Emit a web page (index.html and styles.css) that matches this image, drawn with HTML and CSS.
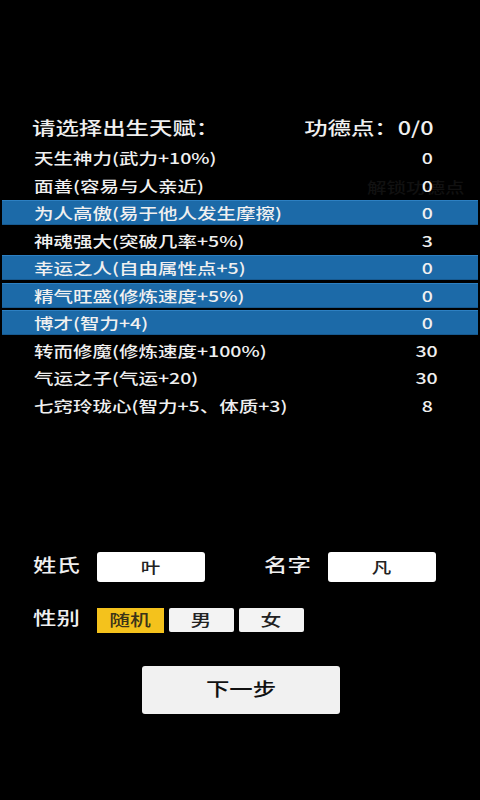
FILE: index.html
```html
<!DOCTYPE html>
<html lang="zh">
<head>
<meta charset="utf-8">
<link rel="stylesheet" href="styles.css">
</head>
<body>
<div class="screen">
  <div class="header">
    <span class="title sx">请选择出生天赋：</span>
    <span class="points sx">功德点：0/0</span>
  </div>
  <div class="list">
    <div class="row"><span class="name sx">天生神力(武力+10%)</span><span class="val"><span class="sx">0</span></span></div>
    <div class="row"><span class="name sx">面善(容易与人亲近)</span><span class="wm sx">解锁功德点</span><span class="val"><span class="sx">0</span></span></div>
    <div class="row sel"><span class="name sx">为人高傲(易于他人发生摩擦)</span><span class="val"><span class="sx">0</span></span></div>
    <div class="row"><span class="name sx">神魂强大(突破几率+5%)</span><span class="val"><span class="sx">3</span></span></div>
    <div class="row sel"><span class="name sx">幸运之人(自由属性点+5)</span><span class="val"><span class="sx">0</span></span></div>
    <div class="row sel"><span class="name sx">精气旺盛(修炼速度+5%)</span><span class="val"><span class="sx">0</span></span></div>
    <div class="row sel"><span class="name sx">博才(智力+4)</span><span class="val"><span class="sx">0</span></span></div>
    <div class="row"><span class="name sx">转而修魔(修炼速度+100%)</span><span class="val"><span class="sx">30</span></span></div>
    <div class="row"><span class="name sx">气运之子(气运+20)</span><span class="val"><span class="sx">30</span></span></div>
    <div class="row"><span class="name sx">七窍玲珑心(智力+5、体质+3)</span><span class="val"><span class="sx">8</span></span></div>
  </div>
  <div class="form">
    <div class="frow">
      <span class="label sx">姓氏</span>
      <div class="input"><span class="sx">叶</span></div>
      <span class="label label2 sx">名字</span>
      <div class="input"><span class="sx">凡</span></div>
    </div>
    <div class="frow gender">
      <span class="label sx">性别</span>
      <div class="opts">
        <div class="opt active"><span class="sx">随机</span></div>
        <div class="opt"><span class="sx">男</span></div>
        <div class="opt"><span class="sx">女</span></div>
      </div>
    </div>
  </div>
  <div class="next-wrap"><div class="next"><span class="sx">下一步</span></div></div>
</div>
</body>
</html>
```
FILE: styles.css
```css
html, body {
  margin: 0;
  padding: 0;
  background: #000;
}
body {
  width: 480px;
  height: 800px;
  overflow: hidden;
  font-family: "Noto Sans CJK SC", "Noto Sans", sans-serif;
  font-weight: 500;
  color: #f0f0f0;
}
.screen {
  width: 480px;
  height: 800px;
  padding-top: 113px;
  box-sizing: border-box;
}
.sx {
  display: inline-block;
  white-space: nowrap;
  transform: scaleX(1.3);
  transform-origin: center center;
}
.header {
  display: flex;
  align-items: center;
  justify-content: space-between;
  height: 28px;
  padding: 0 46px 0 32px;
  margin-bottom: 4px;
}
.title {
  font-size: 18px;
  transform-origin: left center;
}
.points {
  font-size: 18px;
  transform-origin: right center;
}
.list {
  display: flex;
  flex-direction: column;
  gap: 2.5px;
}
.row {
  position: relative;
  height: 25px;
  margin: 0 2px;
  display: flex;
  align-items: center;
  box-sizing: border-box;
  padding-left: 32px;
  font-size: 15px;
}
.row.sel {
  background: #1c6aa8;
  border-top: 1px solid #2d80c2;
  border-bottom: 1px solid #17598f;
}
.name {
  margin-right: auto;
  transform-origin: left center;
}
.val {
  width: 40px;
  text-align: center;
  margin-right: 31px;
  position: relative;
}
.wm {
  position: absolute;
  left: 365px;
  top: 3px;
  font-size: 15px;
  color: #111;
  transform-origin: left center;
}
.form {
  margin-top: 134px;
  padding-left: 33px;
}
.frow {
  display: flex;
  align-items: center;
  height: 31px;
}
.label {
  font-size: 18px;
  width: 64px;
  margin-top: -6px;
  transform-origin: left center;
}
.label2 {
  margin-left: 59px;
}
.input {
  width: 108px;
  height: 30px;
  background: #fff;
  border-radius: 3px;
  color: #222;
  font-size: 15px;
  display: flex;
  align-items: center;
  justify-content: center;
}
.input .sx {
  margin-top: -2px;
}
.gender {
  margin-top: 25px;
  height: 25px;
}
.opts {
  display: flex;
  gap: 5px;
}
.opt {
  width: 65px;
  height: 24px;
  background: #f3f3f3;
  color: #222;
  border-radius: 2px;
  font-size: 16px;
  display: flex;
  align-items: center;
  justify-content: center;
}
.opt .sx {
  margin-top: -2px;
}
.opt.active {
  width: 67px;
  height: 25px;
  background: #f4c21c;
  color: #3a3318;
  border-radius: 0;
}
.next-wrap {
  margin-top: 33px;
  padding-left: 142px;
}
.next {
  width: 198px;
  height: 48px;
  background: #f1f1f1;
  border-radius: 3px;
  color: #111;
  font-size: 18px;
  display: flex;
  align-items: center;
  justify-content: center;
}
.next .sx {
  margin-top: -4px;
}
```
